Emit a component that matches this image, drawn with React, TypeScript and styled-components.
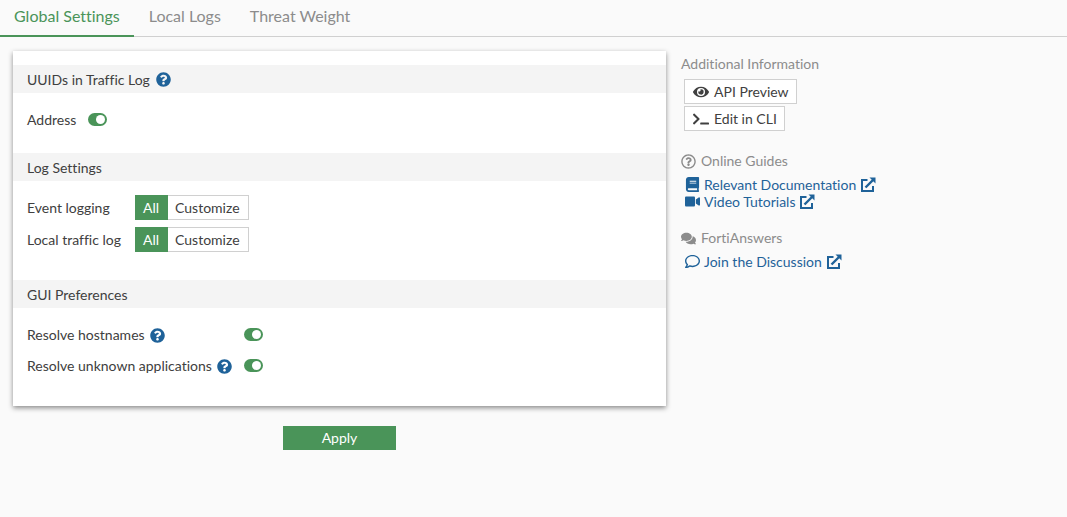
import React, { useState } from "react";
import styled, { createGlobalStyle } from "styled-components";
import {
  FaBook,
  FaComments,
  FaEye,
  FaQuestionCircle,
  FaRegComment,
  FaRegQuestionCircle,
  FaTerminal,
  FaVideo,
} from "react-icons/fa";

const green = "#4a9459";
const blue = "#1f6299";
const grey = "#8c8c8c";

const GlobalStyle = createGlobalStyle`
  *, *::before { box-sizing: border-box; }
  body {
    margin: 0;
    background: #fafafa;
    color: #404040;
    font-family: Lato, "Liberation Sans", sans-serif;
    font-size: 14px;
    line-height: 18px;
    font-variant-ligatures: none;
  }
  button { font: inherit; font-variant-ligatures: none; color: inherit; cursor: pointer; }
  svg { flex: none; display: block; }
`;

const TabBar = styled.nav`
  display: flex;
  gap: 1px;
  height: 37px;
  border-bottom: 1px solid #d0d0d0;
`;

const Tab = styled.button<{ $active: boolean }>`
  height: 37px;
  padding: 0 14px 3px;
  border: 0;
  border-bottom: 2px solid ${(p) => (p.$active ? green : "transparent")};
  background: none;
  color: ${(p) => (p.$active ? green : grey)};
  font-size: 16px;
  line-height: 20px;
`;

const Content = styled.div`
  display: flex;
  align-items: flex-start;
  gap: 14px;
  padding: 14px 0 0 13px;
`;

const Main = styled.main`
  flex: 1;
  min-width: 0;
`;

const Panel = styled.div`
  padding-top: 14px;
  background: #fff;
  box-shadow: 0 2px 5px rgba(0, 0, 0, 0.45);
`;

const SectionTitle = styled.h2`
  display: flex;
  align-items: center;
  gap: 6px;
  height: 28px;
  margin: 0;
  padding: 1px 14px 0;
  background: #f4f4f4;
  font-size: 14px;
  font-weight: 400;
`;

const SectionBody = styled.div<{ $gap?: number; $bottom: number }>`
  display: flex;
  flex-direction: column;
  gap: ${(p) => p.$gap ?? 0}px;
  padding: 14px 14px ${(p) => p.$bottom}px;
`;

const Row = styled.div`
  display: flex;
  align-items: center;
  height: 25px;
`;

const Label = styled.label<{ $width: number }>`
  display: flex;
  align-items: center;
  gap: 5px;
  width: ${(p) => p.$width}px;
  padding-top: 1px;
  white-space: nowrap;
`;

const Help = styled(FaQuestionCircle)`
  width: 15px;
  height: 15px;
  color: ${blue};
`;

const Toggle = styled.input`
  appearance: none;
  display: flex;
  align-items: center;
  width: 19px;
  height: 13px;
  margin: 0;
  padding: 2px;
  border-radius: 7px;
  background: #999;
  cursor: pointer;

  &::before {
    content: "";
    width: 9px;
    height: 9px;
    border-radius: 50%;
    background: #fff;
  }

  &:checked {
    justify-content: flex-end;
    background: ${green};
  }
`;

const Segments = styled.div`
  display: flex;
`;

const Segment = styled.button<{ $active: boolean }>`
  height: 25px;
  padding: 1px 8px 0 7px;
  border: 1px solid ${(p) => (p.$active ? green : "#d0d0d0")};
  border-left-width: ${(p) => (p.$active ? 1 : 0)}px;
  background: ${(p) => (p.$active ? green : "#fff")};
  color: ${(p) => (p.$active ? "#fff" : "#404040")};
`;

const Actions = styled.div`
  display: flex;
  justify-content: center;
  padding-top: 20px;
`;

const ApplyButton = styled.button`
  width: 113px;
  height: 24px;
  padding: 0;
  border: 0;
  background: ${green};
  color: #fff;
`;

const Sidebar = styled.aside`
  flex: 0 0 387px;
  padding-top: 4px;
`;

const SideTitle = styled.h3`
  display: flex;
  align-items: center;
  gap: 5px;
  margin: 0;
  padding-left: 1px;
  color: ${grey};
  font-size: 14px;
  font-weight: 400;
`;

const SideGroup = styled.section`
  padding-bottom: 19px;
`;

const ButtonStack = styled.div`
  display: flex;
  flex-direction: column;
  align-items: flex-start;
  gap: 2px;
  padding: 6px 4px 2px;
`;

const ToolButton = styled.button`
  display: flex;
  align-items: center;
  gap: 5px;
  height: 25px;
  padding: 0 7px 0 8px;
  border: 1px solid #d0d0d0;
  background: #fff;
`;

const LinkList = styled.div`
  display: flex;
  flex-direction: column;
  align-items: flex-start;
  padding: 6px 5px 0;
`;

const SideLink = styled.a`
  display: flex;
  align-items: center;
  gap: 4px;
  height: 17px;
  color: ${blue};
  text-decoration: none;
`;

const ExternalIcon = () => (
  <svg width="16" height="16" viewBox="0 0 16 16" fill="none" stroke="currentColor" strokeWidth="2" aria-hidden="true">
    <path d="M7.5 3H2v11h11V9" />
    <path d="M5.5 10.5L13 3" strokeWidth="2.4" />
    <path d="M9.5 0.5h6v6z" fill="currentColor" stroke="none" />
  </svg>
);

type SegmentedProps = { label: string };

function SegmentedRow({ label }: SegmentedProps) {
  const [value, setValue] = useState("All");
  return (
    <Row>
      <Label as="span" $width={108}>{label}</Label>
      <Segments role="group" aria-label={label}>
        {["All", "Customize"].map((option) => (
          <Segment
            key={option}
            type="button"
            $active={option === value}
            aria-pressed={option === value}
            onClick={() => setValue(option)}
          >
            {option}
          </Segment>
        ))}
      </Segments>
    </Row>
  );
}

type ToggleRowProps = { id: string; label: string; width: number; help?: boolean };

function ToggleRow({ id, label, width, help }: ToggleRowProps) {
  return (
    <Row>
      <Label htmlFor={id} $width={width}>
        {label}
        {help && <Help />}
      </Label>
      <Toggle id={id} type="checkbox" defaultChecked />
    </Row>
  );
}

const tabs = ["Global Settings", "Local Logs", "Threat Weight"];

export default function App() {
  const [tab, setTab] = useState(tabs[0]);
  return (
    <>
      <GlobalStyle />
      <TabBar>
        {tabs.map((name) => (
          <Tab key={name} type="button" $active={name === tab} onClick={() => setTab(name)}>
            {name}
          </Tab>
        ))}
      </TabBar>
      <Content>
        <Main>
          <Panel>
            <SectionTitle>UUIDs in Traffic Log <Help /></SectionTitle>
            <SectionBody $bottom={21}>
              <ToggleRow id="address" label="Address" width={61} />
            </SectionBody>
            <SectionTitle>Log Settings</SectionTitle>
            <SectionBody $gap={7} $bottom={28}>
              <SegmentedRow label="Event logging" />
              <SegmentedRow label="Local traffic log" />
            </SectionBody>
            <SectionTitle>GUI Preferences</SectionTitle>
            <SectionBody $gap={6} $bottom={28}>
              <ToggleRow id="hostnames" label="Resolve hostnames" width={217} help />
              <ToggleRow id="applications" label="Resolve unknown applications" width={217} help />
            </SectionBody>
          </Panel>
          <Actions>
            <ApplyButton type="button">Apply</ApplyButton>
          </Actions>
        </Main>
        <Sidebar>
          <SideGroup>
            <SideTitle>Additional Information</SideTitle>
            <ButtonStack>
              <ToolButton type="button"><FaEye size={16} />API Preview</ToolButton>
              <ToolButton type="button"><FaTerminal size={16} />Edit in CLI</ToolButton>
            </ButtonStack>
          </SideGroup>
          <SideGroup>
            <SideTitle><FaRegQuestionCircle size={15} />Online Guides</SideTitle>
            <LinkList>
              <SideLink href="#documentation"><FaBook size={15} />Relevant Documentation<ExternalIcon /></SideLink>
              <SideLink href="#videos"><FaVideo size={15} />Video Tutorials<ExternalIcon /></SideLink>
            </LinkList>
          </SideGroup>
          <SideGroup>
            <SideTitle><FaComments size={15} />FortiAnswers</SideTitle>
            <LinkList>
              <SideLink href="#discussion"><FaRegComment size={15} />Join the Discussion<ExternalIcon /></SideLink>
            </LinkList>
          </SideGroup>
        </Sidebar>
      </Content>
    </>
  );
}
